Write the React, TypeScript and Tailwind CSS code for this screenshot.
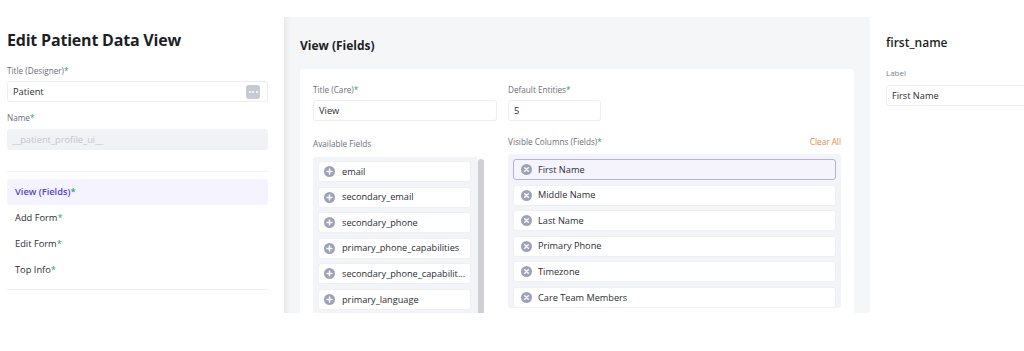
import React from 'react';

const font = { fontFamily: '"Open Sans", "Noto Sans", sans-serif' };

const Req: React.FC = () => <span className="text-[#2fa36b]">*</span>;

const PlusIcon: React.FC = () => (
  <svg width="11" height="11" viewBox="0 0 12 12" className="shrink-0">
    <circle cx="6" cy="6" r="6" fill="#9fa2b6" />
    <path d="M6 3.2v5.6M3.2 6h5.6" stroke="#fff" strokeWidth="1.6" strokeLinecap="round" />
  </svg>
);

const RemoveIcon: React.FC = () => (
  <svg width="11" height="11" viewBox="0 0 12 12" className="shrink-0">
    <circle cx="6" cy="6" r="6" fill="#9fa2b6" />
    <path d="M4 4l4 4M8 4l-4 4" stroke="#fff" strokeWidth="1.5" strokeLinecap="round" />
  </svg>
);

const availableFields = [
  'email',
  'secondary_email',
  'secondary_phone',
  'primary_phone_capabilities',
  'secondary_phone_capabilities',
  'primary_language',
];

const visibleColumns = ['First Name', 'Middle Name', 'Last Name', 'Primary Phone', 'Timezone', 'Care Team Members'];

const navItems = ['View (Fields)', 'Add Form', 'Edit Form', 'Top Info'];

const App: React.FC = () => {
  return (
    <div className="w-[1024px] h-[351px] bg-white flex overflow-hidden text-[#2b2d33]" style={font}>
      {/* Left: designer settings */}
      <div className="w-[284px] shrink-0 pl-[7px] pr-[16px] pt-[28px]">
        <div className="text-[16px] font-bold leading-[24px] text-[#1d1f24] tracking-[-0.2px]">Edit Patient Data View</div>

        <div className="mt-[12px] text-[8.2px] leading-[14px] text-[#6b6f7a]">
          Title (Designer)<Req />
        </div>
        <div className="mt-[3px] h-[21px] border border-[#eceef2] rounded-[3px] flex items-center justify-between pl-[5px] pr-[7px]">
          <span className="text-[9.3px] text-[#2b2d33]">Patient</span>
          <div className="w-[14px] h-[14px] rounded-[3px] bg-[#c7c9d3] flex items-center justify-center gap-[1.5px]">
            <span className="w-[2px] h-[2px] bg-white rounded-full" />
            <span className="w-[2px] h-[2px] bg-white rounded-full" />
            <span className="w-[2px] h-[2px] bg-white rounded-full" />
          </div>
        </div>

        <div className="mt-[9px] text-[8.2px] leading-[14px] text-[#6b6f7a]">
          Name<Req />
        </div>
        <div className="mt-[4px] h-[21px] bg-[#f1f2f6] rounded-[3px] flex items-center pl-[5px]">
          <span className="text-[9.3px] text-[#c3c5cf]">__patient_profile_ui__</span>
        </div>

        <div className="mt-[21px] border-t border-[#eeeff2]" />
        <div className="mt-[7px] flex flex-col">
          {navItems.map((item, i) => (
            <div
              key={item}
              className={`h-[26px] flex items-center pl-[8px] rounded-[3px] text-[9.3px] ${
                i === 0 ? 'bg-[#f4f3fe] text-[#5a3fd0] font-semibold' : 'text-[#2b2d33]'
              }`}
            >
              {item}
              <Req />
            </div>
          ))}
        </div>
        <div className="mt-[6px] border-t border-[#eeeff2]" />
      </div>

      {/* Middle: view fields editor */}
      <div className="w-[586px] shrink-0 mt-[17px] h-[296px] bg-[#f5f6f8] shadow-[inset_7px_0_6px_-5px_rgba(0,0,0,0.07)] pl-[16px] pr-[16px] pt-[20px] overflow-hidden">
        <div className="text-[12px] font-bold leading-[18px] text-[#1d1f24]">View (Fields)</div>
        <div className="mt-[14px] bg-white rounded-[3px] pt-[14px] px-[13px] h-[300px]">
          <div className="grid grid-cols-[184px_333px] gap-x-[11px]">
            <div>
              <div className="text-[8.2px] leading-[14px] text-[#6b6f7a]">
                Title (Care)<Req />
              </div>
              <div className="mt-[3px] h-[21px] border border-[#eceef2] rounded-[3px] flex items-center pl-[5px]">
                <span className="text-[9.3px]">View</span>
              </div>
            </div>
            <div>
              <div className="text-[8.2px] leading-[14px] text-[#6b6f7a]">
                Default Entities<Req />
              </div>
              <div className="mt-[3px] w-[93px] h-[21px] border border-[#eceef2] rounded-[3px] flex items-center pl-[5px]">
                <span className="text-[9.3px]">5</span>
              </div>
            </div>

            {/* Available fields */}
            <div className="mt-[16px]">
              <div className="text-[8.2px] leading-[14px] text-[#6b6f7a]">Available Fields</div>
              <div className="mt-[6px] flex">
                <div className="w-[165px] bg-[#f3f4f8] rounded-[3px] pt-[4px] pl-[5px] pr-[7px] flex flex-col gap-[4.6px]">
                  {availableFields.map((f) => (
                    <div
                      key={f}
                      className="h-[21px] bg-white rounded-[3px] border border-[#eef0f4] flex items-center gap-[7px] pl-[5px] pr-[4px] min-w-0"
                    >
                      <PlusIcon />
                      <span className="text-[9.2px] text-[#2b2d33] truncate">{f}</span>
                    </div>
                  ))}
                </div>
                <div className="w-[6px] mt-[2px] h-[160px] bg-[#cfd0d4] rounded-[3px]" />
              </div>
            </div>

            {/* Visible columns */}
            <div className="mt-[14px]">
              <div className="flex items-center justify-between">
                <div className="text-[8.2px] leading-[14px] text-[#6b6f7a]">
                  Visible Columns (Fields)<Req />
                </div>
                <div className="text-[8.2px] leading-[14px] text-[#e0884a]">Clear All</div>
              </div>
              <div className="mt-[5px] bg-[#f3f4f8] rounded-[3px] pt-[5px] px-[5px] flex flex-col gap-[4.6px]">
                {visibleColumns.map((c, i) => (
                  <div
                    key={c}
                    className={`h-[21px] rounded-[3px] flex items-center gap-[6px] pl-[7px] ${
                      i === 0 ? 'bg-[#f5f4fd] border border-[#b7aee8]' : 'bg-white border border-[#eef0f4]'
                    }`}
                  >
                    <RemoveIcon />
                    <span className="text-[9.2px] text-[#2b2d33]">{c}</span>
                  </div>
                ))}
              </div>
            </div>
          </div>
        </div>
      </div>

      {/* Right: field settings */}
      <div className="flex-1 pl-[16px] pt-[34px] overflow-hidden">
        <div className="text-[12px] font-semibold leading-[18px] text-[#1d1f24]">first_name</div>
        <div className="mt-[15px] text-[8px] leading-[12px] text-[#7d8190]">Label</div>
        <div className="mt-[6px] w-[200px] h-[21px] border border-[#eceef2] rounded-[3px] flex items-center pl-[5px]">
          <span className="text-[9.2px]">First Name</span>
        </div>
      </div>
    </div>
  );
};

export default App;
